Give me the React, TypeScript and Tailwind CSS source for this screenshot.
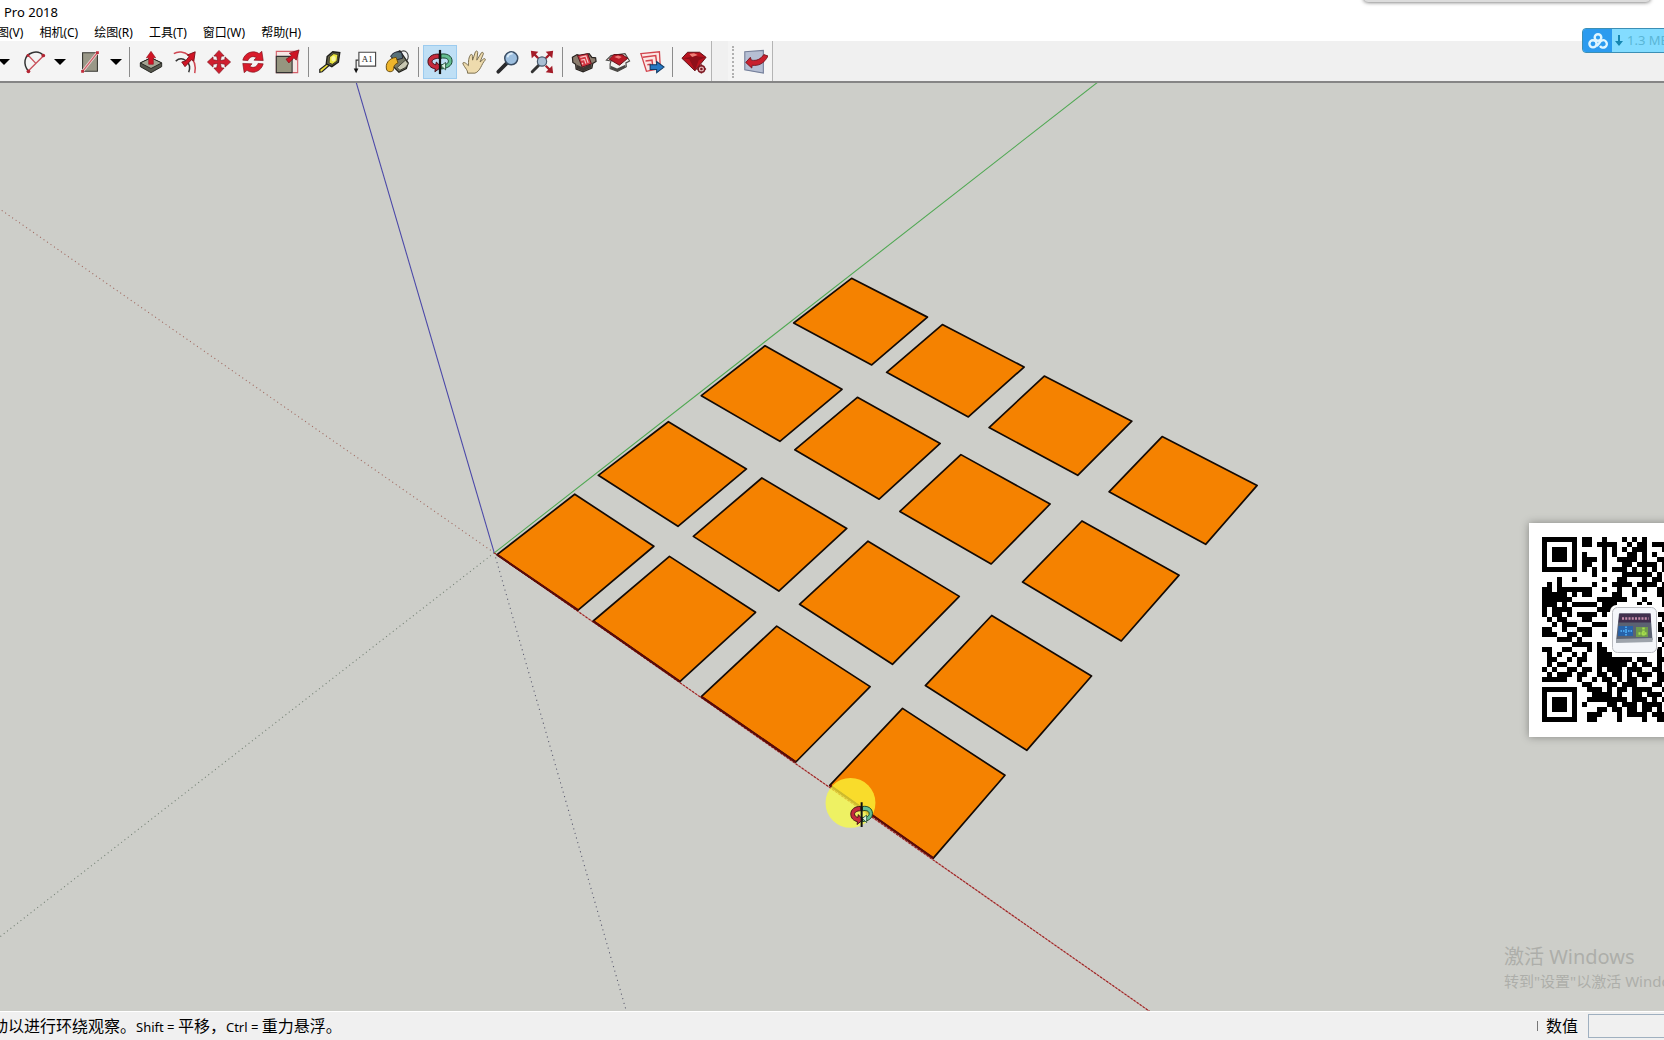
import React from "react";

type Point = [number, number];

const tiles: Point[][] = [
  [[468.6, 522.7], [541.8, 465.8], [616.3, 514.8], [544.9, 575]],
  [[559.2, 585.2], [631, 524.3], [712.1, 577], [640.8, 642.2]],
  [[661, 656.5], [732, 590], [820, 647], [750, 718]],
  [[782, 740], [850.5, 667.5], [947, 730.5], [879.5, 808.5]],
  [[564, 448], [630, 397.5], [703.5, 442], [639, 496]],
  [[653.5, 505.5], [718, 450.5], [798, 498], [734, 557]],
  [[753.5, 569.5], [818, 510], [904, 562], [841, 626]],
  [[872, 646], [934.5, 580], [1028.5, 637], [967.5, 707]],
  [[661, 373], [721, 326], [793.5, 367], [735, 416]],
  [[749, 424], [808, 374.5], [886, 418], [828.5, 470.5]],
  [[848, 482], [905.5, 428.5], [989.5, 475], [934, 531.5]],
  [[963.5, 548.5], [1019.5, 491], [1111, 542], [1056.5, 604]],
  [[748, 304.5], [802.5, 262.5], [874, 299], [821.5, 344]],
  [[835.5, 351], [888, 306], [965, 346], [912.5, 393]],
  [[932, 403], [984, 354.5], [1066.5, 397], [1015.5, 448]],
  [[1045, 463.5], [1095, 411.5], [1184.5, 457.5], [1136, 513]],
];

const qrRows = [
  "1111111011001000101010000",
  "1000001011011110010110111",
  "1011101000001010101110001",
  "1011101010001010011010100",
  "1011101011101001111010011",
  "1000001011001000110111101",
  "1111111010101011101010101",
  "0000000000100000111111010",
  "0001001000001001100010110",
  "0101000000100011110111101",
  "1101111111001001001010011",
  "1111101011000011001000011",
  "1111110000011111100010001",
  "1110101111101110000101001",
  "1011110000011100000000000",
  "1011010111101000000000011",
  "0101100011000000000000001",
  "0010111000111000000000010",
  "1100100111000000000000011",
  "1110011011001000000000001",
  "0001110100000000000000010",
  "0000001111010000000000001",
  "1100110001011000000000010",
  "0101001010011100000000010",
  "0110010110011111110110011",
  "0101100100011111101011010",
  "1010011011010111011100110",
  "0101110110011011010111011",
  "1111100100101101011010011",
  "0000000011000110111000110",
  "1111111001110101101111001",
  "1000001000111101001101110",
  "1011101001111111101110101",
  "1011101010000110111011110",
  "1011101000011011011011010",
  "1000001001110001011110111",
  "1111111001100001000010011",
];

function OrbitShape() {
  return (
    <>
      <path d="M15 10c5-1 8 .5 8 3s-2 4-8 4v4.500c7-.5 12-3.500 12-8.500 0-6-6-8.500-12-7.500z" fill="#64bd90" stroke="#123c26" strokeWidth="1" />
      <path d="M13 5.500C6 5 1 8.500 1 13.500c0 4 3 7 8 8l-.5 3 7-5-5.500-5.500-.5 3C7 16.500 5.500 15 5.500 13.500c0-2 3-3.500 7.500-3.500z" fill="#c42b3c" stroke="#3c0c12" strokeWidth="1" />
      <path d="M20 14.500 15 18l5 4.500z" fill="#d8efe2" stroke="#123c26" strokeWidth=".8" />
      <path d="M14 1v26" stroke="#111" strokeWidth="2.400" />
    </>
  );
}

const icons: Record<string, React.ReactNode> = {
  arc: (
    <>
      <path d="M8 24C2 16 3 7 12 4c5-1.500 9-.5 12 3" stroke="#333" strokeWidth="1.600" fill="none" />
      <path d="M7.500 24 24 7.500M8 7l8 8.500" stroke="#c8505a" strokeWidth="1.400" />
      <circle cx="8" cy="24" r="2" fill="#b32634" /><circle cx="24" cy="7" r="2" fill="#b32634" /><circle cx="7.500" cy="7" r="1.500" fill="#b32634" />
    </>
  ),
  rect: (
    <>
      <path d="M6 4h16v20H6z" fill="#9a9888" stroke="#3a3a34" strokeWidth="1.200" />
      <path d="M6 24 22 4" stroke="#f0d8d8" strokeWidth="3" />
      <path d="M6 24 22 4" stroke="#d06068" strokeWidth="1.400" />
      <path d="M4.500 22.500h3v3h-3zM20.500 2.500h3v3h-3z" fill="#c02c3a" />
    </>
  ),
  push: (
    <>
      <path d="M2.500 15 14 9.500 25.500 15v4L14 25.500 2.500 19z" fill="#55564c" stroke="#23241f" strokeWidth="1" />
      <path d="M2.500 15 14 9.500 25.500 15 14 21z" fill="#a3a391" stroke="#23241f" strokeWidth="1" />
      <path d="M11.500 16.500V9.500H9L14 2.500l5 7h-2.500v7z" fill="#d01425" stroke="#8a0f1a" strokeWidth=".6" />
    </>
  ),
  offset: (
    <>
      <path d="M2 5C11-1 28 8 24.500 26" stroke="#cf4651" strokeWidth="1.600" fill="none" />
      <path d="M4 13c7-6 18 1 14 12" stroke="#333" strokeWidth="1.600" fill="none" />
      <path d="m10.500 14 4-1 4-5-2-1.500L25 3l-1.500 10-2.500-1.500-7 7.500z" fill="#d01425" stroke="#7c101a" strokeWidth="1" />
    </>
  ),
  move: (
    <path d="m14 1.500 5.500 6-3 .2-1 4.800 4.800-1 .2-3 6 5.500-6 5.500-.2-3-4.800-1 1 4.800 3 .2-5.500 6-5.500-6 3-.2 1-4.800-4.800 1-.2 3-6-5.500 6-5.500.2 3 4.800 1-1-4.800-3-.2z" fill="#cf1e2f" stroke="#7c101a" strokeWidth=".7" />
  ),
  rotate: (
    <>
      <path d="M3 12C5 4 14 .5 20.500 5l3-2.500 1.500 10-10-.5 2.500-2.700C14 7 10 8.500 8.500 12.500z" fill="#d91c2c" stroke="#7c101a" strokeWidth=".7" />
      <path d="M25 16c-2 8-11 11.500-17.500 7l-3 2.500-1.500-10 10 .5-2.500 2.700c3.500 2.300 7.500.8 9-3.200z" fill="#d91c2c" stroke="#7c101a" strokeWidth=".7" />
    </>
  ),
  scale: (
    <>
      <path d="M2.500 2.500h23v23h-23z" fill="#f6e7e5" stroke="#d4606a" strokeWidth="1.200" />
      <path d="M2.500 8h17v17.500h-17z" fill="#96957f" stroke="#333" strokeWidth="1.200" />
      <path d="m13 11 6-4-2.500-2.500L27 1l-3 11-2.500-2.500L16 15z" fill="#d01425" stroke="#7c101a" strokeWidth=".8" />
    </>
  ),
  tape: (
    <>
      <path d="m3 22 9-7 2 2-8.500 7.500L3 25z" fill="#efe139" stroke="#222" strokeWidth="1.300" />
      <path d="m11 8 6-5 7.500 1-1.500 10-7 5-6-3z" fill="#67644b" stroke="#1d1d19" strokeWidth="1.500" />
      <path d="m13.500 8.500 4.500-3.500 4.500 1-1 7-5 3.500-3.500-1.500z" fill="#e9e43e" stroke="#222" strokeWidth=".8" />
      <ellipse cx="17.800" cy="10.500" rx="2.300" ry="3" fill="#f7f5a5" />
    </>
  ),
  label: (
    <>
      <path d="M8.500 3.500h18v15h-18z" fill="#fff" stroke="#444" strokeWidth="1.200" />
      <path d="M8 12H5.500v10" stroke="#333" strokeWidth="1.200" fill="none" />
      <path d="M3 21h5l-2.500 5z" fill="#111" />
      <text x="17.500" y="14.500" textAnchor="middle" fontSize="9.500" fontFamily="Liberation Serif, serif" fill="#222">A1</text>
    </>
  ),
  paint: (
    <>
      <ellipse cx="20" cy="8" rx="5" ry="6" fill="none" stroke="#444" strokeWidth="1.200" />
      <path d="m8 6 8-4 9 13-2 6-8 4-8-8z" fill="#767763" stroke="#22221d" strokeWidth="1.300" />
      <path d="m13 20 9-8 3 4-3 4-6 3z" fill="#c9c8b2" stroke="#3a3a30" strokeWidth="1" />
      <path d="M6 8c3-5 8-6 12-4l1 6-8 2z" fill="#587078" stroke="#223" strokeWidth="1" />
      <path d="M12 9C4 10-.5 16 2 23c2 2 5 2 7 0 0-5 2-7 5-8z" fill="#eeb52b" stroke="#65480b" strokeWidth="1" />
    </>
  ),
  orbit: <OrbitShape />,
  hand: (
    <path d="M7 26c1-3-5-8-5-11 1.500-1.500 4 1 6 3 0-5 0-9 2.500-12 1.500-.5 2 .5 1.800 2L12.500 12l3-9c1-1.500 2.500-.8 2.500.8L17 12l5-8c1.200-1 2.500 0 2 1.500L20.500 14l4-3.500c1.500-.5 2 .5 1.500 1.500C22 16 21 24 15 26z" fill="#eedbad" stroke="#75694a" strokeWidth="1" strokeLinejoin="round" />
  ),
  zoom: (
    <>
      <path d="m3.500 24.500 9-9" stroke="#2a2a2c" strokeWidth="4" strokeLinecap="round" />
      <circle cx="17.500" cy="10" r="7" fill="#9dbfdf" stroke="#3a4d63" strokeWidth="1.600" />
      <path d="M13.500 9c.5-3 3-4.500 5.500-4" stroke="#dcecf8" strokeWidth="2" fill="none" />
    </>
  ),
  extents: (
    <>
      <path d="m3.500 24.500 7-7" stroke="#333" strokeWidth="3.200" strokeLinecap="round" />
      <path d="m5 5 5 5M23 5l-5 5M23 23l-5-5" stroke="#a41c28" strokeWidth="2.400" />
      <path d="m2 2 8 1-7 7zM26 2l-8 1 7 7zM26 26l-8-1 7-7z" fill="#a41c28" />
      <circle cx="14" cy="13.500" r="5" fill="#a9bfd4" stroke="#47586b" strokeWidth="1.300" />
    </>
  ),
  warehouse: (
    <>
      <path d="m1.500 9 5-3 3 1 10-2 3 4 4 .5.500 4-3.500 2-1 5-9.500 4-7.500-3-.5-5-3-2z" fill="#8b7d6e" stroke="#27221f" strokeWidth="1.300" />
      <path d="m6 17 7 3 9-4v4l-9 4-7-3z" fill="#3c3733" />
      <path d="m7 7 11-2 4 11-10 3.500z" fill="#d33541" stroke="#501018" strokeWidth="1" />
      <path d="m10 9 6-1.500 2.500 7.500M11 12l3.500-.8 1.500 4.500M12 15l1 1.500" stroke="#f7c9c9" strokeWidth="1.300" fill="none" />
    </>
  ),
  extension: (
    <>
      <path d="m1.500 12 5-5 15-2 2 3 3 5-4 2 .5 4-9.500 5-8-3v-5l1-3z" fill="#f1f0ed" stroke="#4a4845" strokeWidth="1.200" />
      <path d="m6 18 7 3 9-4v3l-9 4-7-3z" fill="#4a4744" />
      <path d="m4.500 11 5-5h9l6 4-9 7.500z" fill="#b81a26" stroke="#5d0d14" strokeWidth="1" />
      <path d="m10 8.500 4-1.500 4 1.500-3 2z" fill="#ee7b79" />
    </>
  ),
  layout: (
    <>
      <path d="m2 5 20-2 1 18-15 3z" fill="#fbe6e4" stroke="#d2434c" strokeWidth="1.400" />
      <path d="m4 9 14-2 1 8M7 13l7-1 1 9M9 17l3-.5 1 4" stroke="#d2434c" strokeWidth="1.600" fill="none" />
      <path d="M12 17h7v-3.500l8 6-8 6V22h-7z" fill="#2779c4" stroke="#123a63" strokeWidth="1.100" />
    </>
  ),
  manager: (
    <>
      <path d="m1 10 6-6.500h13l7 5.500-12 14.500z" fill="#b8141f" stroke="#5a0a10" strokeWidth="1" />
      <path d="M1 10 9 11l6 12.500L19 12l8-3-9-1-4-2-5 3z" fill="#8f0f19" />
      <path d="m9 5.500 5-1 4 2-6 2z" fill="#f08078" />
      <circle cx="22" cy="21.500" r="3.500" fill="#e7b9ba" stroke="#7c1822" strokeWidth="1.600" />
      <circle cx="22" cy="21.500" r="1.400" fill="#7c1822" />
      <path d="M22 16.500v2M22 24.500v2M17 21.500h2M25 21.500h2" stroke="#7c1822" strokeWidth="1.600" />
    </>
  ),
  plugin: (
    <>
      <path d="m3 3 20-1.500V26L3 22.500z" fill="#b6bfd4" stroke="#76809b" strokeWidth="1.200" />
      <path d="m4 14.500 5-5.500 1 3c6 1 10-1 13.500-6l4.500 1.500c-4 8-10 11-17 10l-.5 3z" fill="#c9202e" stroke="#6d1019" strokeWidth=".9" strokeLinejoin="round" />
    </>
  ),
};

function Tool({ name, label, active = false }: { name: string; label: string; active?: boolean }) {
  return (
    <button
      aria-label={label}
      className={
        active
          ? "flex h-[34px] w-[34px] shrink-0 items-center justify-center border border-[#9ccbef] bg-[#bfdff5]"
          : "flex h-[34px] w-[34px] shrink-0 items-center justify-center"
      }
    >
      <svg viewBox="0 0 28 28" className="size-[26px]" fill="none">{icons[name]}</svg>
    </button>
  );
}

function Arrow({ label }: { label: string }) {
  return (
    <button aria-label={label} className="flex h-8 w-[18px] shrink-0 items-center justify-center">
      <svg viewBox="0 0 12 6" className="h-1.5 w-3"><path d="M0 0h12L6 6z" fill="#000" /></svg>
    </button>
  );
}

function Divider({ tight = false }: { tight?: boolean }) {
  return (
    <div className={tight ? "mr-1 ml-[3px] h-[30px] w-px shrink-0 bg-[#8c8c8c]" : "mx-1 h-[30px] w-px shrink-0 bg-[#8c8c8c]"} />
  );
}

function QrCard() {
  return (
    <aside className="absolute top-[440px] -right-[79px] w-[214px] bg-white p-[13px] shadow-[0_0_8px_rgba(0,0,0,0.35)]">
      <svg viewBox="0 0 37 37" className="mt-px h-[185px] w-[185px]" shapeRendering="crispEdges">
        {qrRows.map((row, y) =>
          row.split("").map((v, x) => (v === "1" ? <path key={`${x}-${y}`} d={`M${x} ${y}h1v1h-1z`} /> : null)),
        )}
        <g shapeRendering="geometricPrecision">
          <rect x="13.600" y="13.600" width="9.600" height="9.600" rx="1.300" fill="#fff" />
          <rect x="14.100" y="14.100" width="8.800" height="9" rx="1" fill="#f4f6fa" stroke="#b9bbc0" strokeWidth=".2" />
          <path d="M15.400 15.300h6.300l.4 5.300-7.300.3z" fill="#5b6272" />
          <path d="M15.500 15.300h6.200l.1 1.800h-6.500z" fill="#41304e" />
          <path d="m14.800 20.400 7.300-.2v.8l-7.300.2z" fill="#9da3ab" />
          <path d="M15.300 17.800h2.900v2h-3z" fill="#2862a8" />
          <path d="M18.800 18h2.400v2h-2.400z" fill="#6f9a4c" />
          <path d="M16 16.300h5.300" stroke="#c58cab" strokeWidth=".5" strokeDasharray=".4 .25" />
          <path d="M15.700 18.800h2.300M16.800 17.900v1.800" stroke="#49a3ea" strokeWidth=".4" strokeDasharray=".3 .2" />
          <path d="M19.300 19.300h1.700M20.300 18.100v1.800" stroke="#a7e04c" strokeWidth=".5" strokeDasharray=".4 .2" />
        </g>
      </svg>
      <div className="h-0.5" />
    </aside>
  );
}

function Scene() {
  return (
    <svg viewBox="0.5 78.500 1568 874" preserveAspectRatio="xMinYMin slice" className="block h-full w-full" role="img" aria-label="模型视图">
      <g fill="none" strokeWidth="1">
        <path d="M466 521 0 197" stroke="#a0685f" strokeDasharray="1 3" />
        <path d="M466 521 0 883" stroke="#748074" strokeDasharray="1 3" />
        <path d="m466 521 124.500 432" stroke="#55556a" strokeDasharray="1 3.500" />
        <path d="M466 521 336 78" stroke="#4a47a8" />
        <path d="m466 521 568-443" stroke="#4fa852" />
        <path d="m466 521 617.500 432" stroke="#c07a78" />
        <path d="m466 521 617.500 432" stroke="#9a2020" strokeDasharray="2 1.500" />
      </g>
      {tiles.map((t, i) => (
        <polygon key={i} points={t.map((p) => p.join(",")).join(" ")} fill="#f58200" stroke="#140a04" strokeWidth="1.600" strokeLinejoin="round" />
      ))}
      <path d="m468.600 522.700 76.300 52.300M559.200 585.200l81.600 57M661 656.500l89 61.500M782 740l97.500 68.500" stroke="#5c0a08" strokeWidth="2" />
      <circle cx="801.500" cy="756.500" r="23.500" fill="#fbff3c" fillOpacity=".72" />
      <svg x="801" y="755" width="22" height="25" viewBox="0 0 28 28" preserveAspectRatio="none"><OrbitShape /></svg>
    </svg>
  );
}

export default function App() {
  return (
    <div className="relative flex h-screen flex-col overflow-hidden bg-[#f0f0f0] font-['Noto_Sans','Noto_Sans_CJK_SC',sans-serif] text-black">
      <header className="h-[41px] shrink-0 bg-white text-xs">
        <h1 className="h-6 pl-1 text-[13px] leading-6 font-normal">Pro 2018</h1>
        <nav className="-ml-[15px] flex h-[17px] items-center gap-4 leading-4 whitespace-nowrap">
          <button>视图(V)</button>
          <button>相机(C)</button>
          <button>绘图(R)</button>
          <button>工具(T)</button>
          <button>窗口(W)</button>
          <button>帮助(H)</button>
        </nav>
      </header>

      <div className="flex h-[42px] shrink-0 items-center overflow-hidden border-b-2 border-[#858585] bg-[#f0f0f0]">
        <div className="-ml-[5px] flex h-full items-center border-r border-[#b4b4b4] bg-[#f4f4f4] pt-px">
          <Arrow label="直线选项" />
          <div className="w-1" />
          <Tool name="arc" label="圆弧" />
          <Arrow label="圆弧选项" />
          <div className="w-1" />
          <Tool name="rect" label="矩形" />
          <Arrow label="矩形选项" />
          <Divider />
          <Tool name="push" label="推/拉" />
          <Tool name="offset" label="偏移" />
          <Tool name="move" label="移动" />
          <Tool name="rotate" label="旋转" />
          <Tool name="scale" label="缩放" />
          <Divider />
          <Tool name="tape" label="卷尺工具" />
          <Tool name="label" label="文字" />
          <Tool name="paint" label="材质" />
          <Divider tight />
          <Tool name="orbit" label="环绕观察" active />
          <Tool name="hand" label="平移" />
          <Tool name="zoom" label="实时缩放" />
          <Tool name="extents" label="充满视窗" />
          <Divider tight />
          <Tool name="warehouse" label="3D Warehouse" />
          <Tool name="extension" label="Extension Warehouse" />
          <Tool name="layout" label="发送到 LayOut" />
          <Divider tight />
          <Tool name="manager" label="扩展程序管理器" />
        </div>
        <div className="ml-4 flex h-full items-center border-r border-[#b4b4b4] bg-[#f4f4f4] pt-px">
          <div className="ml-1 h-8 border-l-2 border-dotted border-[#b0b0b0]" />
          <div className="w-1" />
          <Tool name="plugin" label="插件" />
        </div>
      </div>

      <main className="relative min-h-0 flex-1 overflow-hidden bg-[#cdcec9]">
        <Scene />
        <QrCard />
        <div className="absolute bottom-5 left-[calc(100%-160px)] whitespace-nowrap text-[#adaeaa]">
          <p className="text-xl leading-7">激活 Windows</p>
          <p className="text-[15px] leading-5">转到"设置"以激活 Windows。</p>
        </div>
      </main>

      <footer className="flex h-[29px] shrink-0 items-center border-t border-white bg-[#f0f0f0] text-base leading-6 whitespace-nowrap">
        <p className="-ml-2 flex-1">
          动以进行环绕观察。<span className="text-[13px]">Shift = </span>平移，<span className="text-[13px]">Ctrl = </span>重力悬浮。
        </p>
        <div className="mr-2 h-2.5 w-px bg-[#777]" />
        <label htmlFor="measure">数值</label>
        <input id="measure" className="ml-2.5 h-6 w-[76px] border border-r-0 border-[#9fb0c0] bg-[#f0f0f0] px-1 text-sm" />
      </footer>

      <div className="absolute -top-2 right-3.5 h-2.5 w-[286px] rounded-sm bg-[#dcdcdc] shadow-[0_0_4px_rgba(0,0,0,0.7)]" />
      <div className="absolute top-7 left-[calc(100%-82px)] flex h-[25px] w-[120px] items-center overflow-hidden rounded border border-[#3c8fb5] bg-[#83dcff] text-[#5ab6d6]">
        <div className="flex h-full w-[29px] shrink-0 items-center justify-center bg-[#2b9bef]">
          <svg viewBox="0 0 20 16" className="h-4 w-5" fill="none" stroke="#dff6ff" strokeWidth="2.400">
            <circle cx="10" cy="4.500" r="3.300" /><circle cx="5" cy="10.800" r="3.600" />
            <path d="M8.500 13c2-1 3-4 5-5.400a3.700 3.700 0 1 1-1.500 5.400" />
          </svg>
        </div>
        <svg viewBox="0 0 8 12" className="ml-[3px] h-3 w-2"><path d="M3 0h2v6h3l-4 5-4-5h3z" fill="#1687b2" /></svg>
        <span className="ml-1 text-[13px] whitespace-nowrap">1.3 MB/s</span>
      </div>
    </div>
  );
}
